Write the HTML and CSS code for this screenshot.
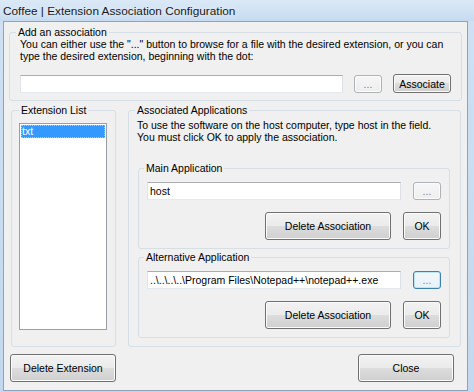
FILE: index.html
```html
<!DOCTYPE html>
<html>
<head>
<meta charset="utf-8">
<link rel="stylesheet" href="styles.css">
</head>
<body>
<div class="window">
  <div class="titlebar"><span class="title">Coffee | Extension Association Configuration</span></div>
  <div class="client">
    <fieldset class="group g-add">
      <legend>Add an association</legend>
      <p class="desc">You can either use the "..." button to browse for a file with the desired extension, or you can<br>type the desired extension, beginning with the dot:</p>
      <div class="row add-row">
        <div class="input add-input"></div>
        <button class="btn dots disabled">...</button>
        <button class="btn assoc">Associate</button>
      </div>
    </fieldset>
    <div class="middle">
      <fieldset class="group g-ext">
        <legend>Extension List</legend>
        <div class="listbox"><div class="item sel"><span class="focus">txt</span></div></div>
      </fieldset>
      <fieldset class="group g-apps">
        <legend>Associated Applications</legend>
        <p class="desc apps-desc">To use the software on the host computer, type host in the field.<br>You must click OK to apply the association.</p>
        <fieldset class="group sub g-main">
          <legend>Main Application</legend>
          <div class="row path-row">
            <div class="input path-input">host</div>
            <button class="btn dots disabled">...</button>
          </div>
          <div class="row act-row">
            <button class="btn del">Delete Association</button>
            <button class="btn ok">OK</button>
          </div>
        </fieldset>
        <fieldset class="group sub g-alt">
          <legend>Alternative Application</legend>
          <div class="row path-row">
            <div class="input path-input">..\..\..\..\Program Files\Notepad++\notepad++.exe</div>
            <button class="btn dots focused">...</button>
          </div>
          <div class="row act-row">
            <button class="btn del">Delete Association</button>
            <button class="btn ok">OK</button>
          </div>
        </fieldset>
      </fieldset>
    </div>
    <div class="bottom">
      <button class="btn del-ext">Delete Extension</button>
      <button class="btn close">Close</button>
    </div>
  </div>
</div>
</body>
</html>
```

FILE: styles.css
```css
html, body {
  margin: 0;
  padding: 0;
}
body {
  width: 474px;
  height: 392px;
  overflow: hidden;
  background: linear-gradient(#cfe1f3, #c3d8ee);
  font-family: "Liberation Sans", Arial, sans-serif;
  font-size: 10.5px;
  color: #000;
}
.window {
  display: flex;
  flex-direction: column;
  height: 392px;
}
.titlebar {
  height: 21px;
  display: flex;
  align-items: center;
  padding-left: 3px;
  background: linear-gradient(#dbe9f7, #c6dbf0);
}
.title {
  font-size: 11.8px;
  color: #1a1a1a;
  text-shadow: 0 0 6px #fff;
}
.client {
  margin-left: 3px;
  height: 368px;
  border: 1px solid #8ea3bb;
  background: #f0f0f0;
  padding: 0 5px 0 5px;
  box-sizing: content-box;
  display: flex;
  flex-direction: column;
  width: 453px;
}
.group {
  margin: 0;
  min-width: 0;
  border: 1px solid #d5dfe5;
  border-radius: 3px;
  padding: 0;
}
.group legend {
  padding: 0 2px;
  line-height: 12px;
  height: 12px;
}
.desc {
  margin: 0;
  line-height: 12px;
}
.g-add {
  margin-top: 4px;
  padding: 0 10px 7px 10px;
}
.g-add legend {
  margin-left: -4px;
}
.row {
  display: flex;
  align-items: center;
}
.add-row {
  margin-top: 12px;
  height: 19px;
}
.input {
  box-sizing: border-box;
  height: 18px;
  background: #fff;
  border: 1px solid;
  border-color: #abadb3 #dbdfe6 #e3e9ef #e2e3ea;
  padding: 0 2px;
  line-height: 16px;
  white-space: nowrap;
  overflow: hidden;
}
.add-input {
  width: 323px;
}
.btn {
  box-sizing: border-box;
  font-family: inherit;
  font-size: 10.5px;
  color: #000;
  border: 1px solid #707070;
  border-radius: 3px;
  background: linear-gradient(#f2f2f2 0%, #ebebeb 50%, #dddddd 50%, #cfcfcf 100%);
  box-shadow: inset 0 0 0 1px #fbfbfb;
  padding: 0;
  margin: 0;
}
.dots {
  width: 28px;
  height: 18px;
  line-height: 14px;
}
.disabled {
  color: #838383;
  border-color: #adb2b5;
  background: linear-gradient(#f6f6f6, #eeeeee);
  box-shadow: inset 0 0 0 1px #fcfcfc;
}
.focused {
  color: #838383;
  border-color: #3c7fb1;
  background: linear-gradient(#f2f8fc, #e6f2fa);
  box-shadow: inset 0 0 0 1px #bfe3f8;
}
.add-row .dots {
  margin-left: 11px;
}
.assoc {
  margin-left: 11px;
  width: 58px;
  height: 19px;
}
.middle {
  display: flex;
  margin-top: 3px;
  align-items: stretch;
}
.g-ext {
  margin-left: 2px;
  width: 105px;
  box-sizing: border-box;
  padding: 7px 8px 0 7px;
}
.g-ext legend {
  margin-left: 0;
}
.listbox {
  box-sizing: border-box;
  height: 207px;
  background: #fff;
  border: 1px solid #9a9ea6;
  padding: 1px;
}
.item {
  height: 13px;
  line-height: 13px;
}
.sel {
  background: #3399ff;
  color: #fff;
}
.focus {
  display: block;
  height: 13px;
  box-sizing: border-box;
  border: 1px dotted #99ccff;
  padding-left: 0;
  line-height: 11px;
}
.g-apps {
  margin-left: 12px;
  width: 333px;
  box-sizing: border-box;
  padding: 0 8px 8px 8px;
}
.g-apps legend {
  margin-left: -2px;
}
.apps-desc {
  margin-top: 3px;
}
.sub {
  margin-left: 1px;
  width: 312px;
  box-sizing: border-box;
  padding: 0 8px 8px 8px;
}
.sub legend {
  margin-left: -3px;
}
.g-main {
  margin-top: 19px;
}
.g-alt {
  margin-top: 2px;
}
.path-row {
  margin-top: 8px;
  height: 18px;
}
.path-input {
  width: 254px;
}
.path-row .dots {
  margin-left: 12px;
}
.act-row {
  margin-top: 12px;
  justify-content: flex-end;
}
.del {
  width: 126px;
  height: 28px;
}
.ok {
  margin-left: 12px;
  width: 38px;
  height: 28px;
}
.bottom {
  display: flex;
  justify-content: space-between;
  margin-top: 7px;
  padding-left: 1px;
  padding-right: 8px;
}
.del-ext {
  width: 106px;
  height: 28px;
}
.close {
  width: 96px;
  height: 28px;
}
```
